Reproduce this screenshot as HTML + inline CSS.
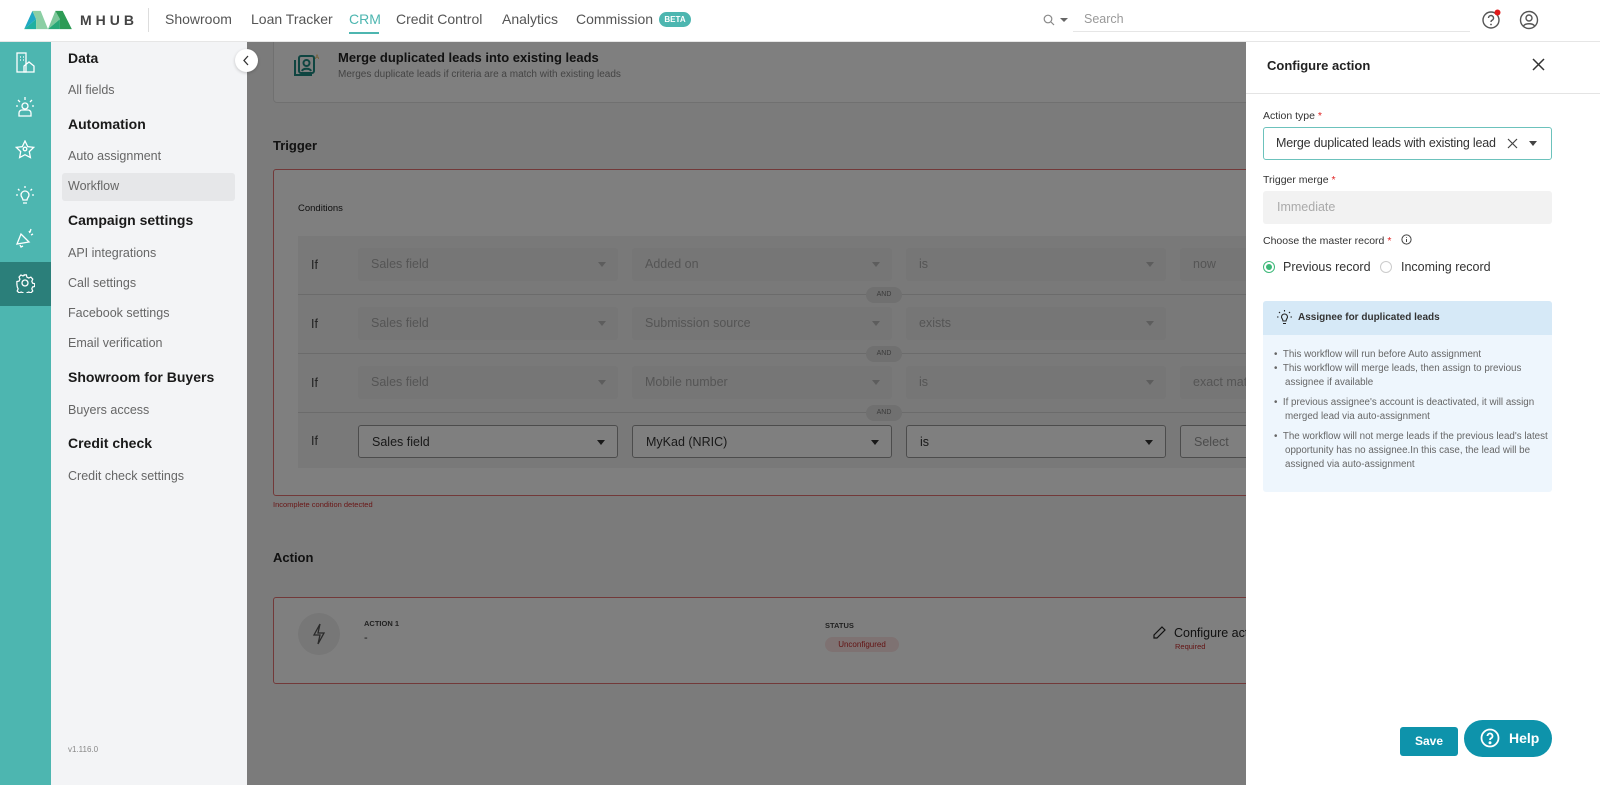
<!DOCTYPE html>
<html><head><meta charset="utf-8">
<style>
*{box-sizing:border-box;margin:0;padding:0}
body{width:1600px;height:785px;overflow:hidden;font-family:"Liberation Sans",sans-serif;background:#fff;position:relative;color:#222}
.abs{position:absolute}
#hdr{left:0;top:0;width:1600px;height:42px;background:#fff;border-bottom:1px solid #e6e6e6}
.nav{top:11px;font-size:14px;color:#555}
#rail{left:0;top:42px;width:51px;height:743px;background:#4db6b0}
#side{left:51px;top:42px;width:196px;height:743px;background:#f3f4f6}
.sh{left:17px;font-size:14px;font-weight:bold;color:#1a1a1a}
.si{left:17px;font-size:12.5px;color:#666}
#content{left:247px;top:42px;width:999px;height:743px;background:#f7f7f7;overflow:hidden}
.box{background:#fff;border:1px solid #e0e0e0;border-radius:4px}
.sel{height:33px;background:#ececec;border-radius:3px;font-size:12.5px;color:#aaa;padding:9px 13px}
.sel:after{content:"";position:absolute;right:12px;top:14px;border:4px solid transparent;border-top:5px solid #bbb}
.sel.on{background:#fff;border:1px solid #999;color:#333}
.sel.on:after{border-top-color:#333}
.and{left:619px;width:36px;height:16px;border-radius:8px;background:#e0e0e0;font-size:7px;color:#777;text-align:center;line-height:16px}
#ov{left:247px;top:42px;width:999px;height:743px;background:rgba(0,0,0,0.5)}
#panel{left:1246px;top:42px;width:354px;height:743px;background:#fff}
.lbl{font-size:10.5px;color:#333}
.req{color:#e02020}
</style></head><body>
<div id="hdr" class="abs">
 <svg class="abs" style="left:22px;top:9px" width="52" height="22" viewBox="0 0 52 24">
  <polygon points="0,22 9,2 13,11" fill="#1fa8c4"/><polygon points="0,22 13,11 13,22" fill="#1fb0a0"/>
  <polygon points="13,11 9,2 18,2 26,22 13,22" fill="#8ccfa4"/>
  <polygon points="26,22 34,2 39,11" fill="#7cc79a"/><polygon points="26,22 39,11 39,22" fill="#27a877"/>
  <polygon points="39,11 34,2 42,2 52,22 39,22" fill="#2d9b55"/>
 </svg>
 <div class="abs" style="left:80px;top:12px;font-size:14px;font-weight:bold;letter-spacing:4px;color:#444">MHUB</div>
 <div class="abs" style="left:148px;top:8px;width:1px;height:24px;background:#ddd"></div>
 <div class="abs nav" style="left:165px">Showroom</div>
 <div class="abs nav" style="left:251px">Loan Tracker</div>
 <div class="abs nav" style="left:349px;color:#4db6b0">CRM</div>
 <div class="abs" style="left:349px;top:32px;width:30px;height:2px;background:#4db6b0"></div>
 <div class="abs nav" style="left:396px">Credit Control</div>
 <div class="abs nav" style="left:502px">Analytics</div>
 <div class="abs nav" style="left:576px">Commission</div>
 <div class="abs" style="left:659px;top:12px;width:32px;height:15px;border-radius:8px;background:#4db6b0;color:#fff;font-size:8px;font-weight:bold;text-align:center;line-height:15px">BETA</div>
 <svg class="abs" style="left:1043px;top:14px" width="12" height="12" viewBox="0 0 12 12"><circle cx="5" cy="5" r="3.8" stroke="#888" fill="none" stroke-width="1.2"/><line x1="8" y1="8" x2="11" y2="11" stroke="#888" stroke-width="1.2"/></svg>
 <div class="abs" style="left:1060px;top:18px;border:4px solid transparent;border-top:4px solid #666"></div>
 <div class="abs" style="left:1084px;top:12px;font-size:12.5px;color:#999">Search</div>
 <div class="abs" style="left:1073px;top:31px;width:397px;height:1px;background:#e6e6e6"></div>
 <svg class="abs" style="left:1481px;top:9px" width="22" height="22" viewBox="0 0 22 22"><circle cx="10" cy="11" r="8" stroke="#555" fill="none" stroke-width="1.4"/><path d="M7.5 9a2.5 2.5 0 1 1 3.5 2.3c-.8.4-1 .9-1 1.7" stroke="#555" fill="none" stroke-width="1.4"/><circle cx="10" cy="15.5" r=".9" fill="#555"/><circle cx="16.5" cy="3.5" r="3" fill="#e21b1b"/></svg>
 <svg class="abs" style="left:1519px;top:10px" width="20" height="20" viewBox="0 0 20 20"><circle cx="10" cy="10" r="8.5" stroke="#555" fill="none" stroke-width="1.4"/><circle cx="10" cy="8" r="3" stroke="#555" fill="none" stroke-width="1.4"/><path d="M4.5 16c1.5-3 9.5-3 11 0" stroke="#555" fill="none" stroke-width="1.4"/></svg>
</div>

<div id="rail" class="abs">
 <div class="abs" style="left:0;top:220px;width:51px;height:44px;background:#2b7f7a"></div>
 <svg class="abs" style="left:15px;top:10px" width="20" height="22" viewBox="0 0 20 22" fill="none" stroke="#fff" stroke-width="1.3"><rect x="2" y="1" width="9" height="19"/><path d="M9 20v-6l5-4 5 4v6z"/><path d="M5 5h1M8 5h1M5 8h1M8 8h1"/></svg>
 <svg class="abs" style="left:15px;top:54px" width="20" height="22" viewBox="0 0 20 22" fill="none" stroke="#fff" stroke-width="1.3"><circle cx="10" cy="10" r="3"/><path d="M4 20v-3a3 3 0 0 1 3-3h6a3 3 0 0 1 3 3v3zM10 1v3M3 4l2 2M17 4l-2 2M1 10h2M17 10h2"/></svg>
 <svg class="abs" style="left:15px;top:98px" width="20" height="20" viewBox="0 0 20 20" fill="none" stroke="#fff" stroke-width="1.3"><path d="M10 1l2.7 5.6 6 .8-4.4 4.2 1.1 6L10 14.7 4.6 17.6l1.1-6L1.3 7.4l6-.8z"/><circle cx="10" cy="9" r="1.8"/></svg>
 <svg class="abs" style="left:15px;top:142px" width="20" height="22" viewBox="0 0 20 22" fill="none" stroke="#fff" stroke-width="1.3"><path d="M6 11a4 4 0 1 1 8 0c0 2-2 3-2 5H8c0-2-2-3-2-5zM8 19h4M10 2v2M3 5l1.5 1.5M17 5l-1.5 1.5M1 11h2M17 11h2"/></svg>
 <svg class="abs" style="left:15px;top:186px" width="20" height="20" viewBox="0 0 20 20" fill="none" stroke="#fff" stroke-width="1.3"><path d="M2 16l4-10 8 8zM5 17l1 2 2-1M14 3l1 2M18 6l-2 1M16 1l-1 3"/></svg>
 <svg class="abs" style="left:15px;top:231px" width="20" height="20" viewBox="0 0 20 20" fill="none" stroke="#fff" stroke-width="1.3"><circle cx="10" cy="10" r="3"/><path d="M8.5 1.5h3l.5 2.3 2 1 2.2-1 2 2.2-1 2.2.8 2 2.2.5v3l-2.2.5-.8 2 1 2.2-2 2.1-2.2-1-2 .9-.5 2.3h-3l-.5-2.3-2-.9-2.2 1-2-2.1 1-2.2-.9-2L1.5 11.5v-3l2.3-.5.9-2-1-2.2 2-2.2 2.2 1 2-1z" transform="scale(.95) translate(.5 .5)"/></svg>
</div>

<div id="side" class="abs">
 <div class="abs sh" style="top:8px">Data</div>
 <div class="abs si" style="top:41px">All fields</div>
 <div class="abs sh" style="top:74px">Automation</div>
 <div class="abs si" style="top:107px">Auto assignment</div>
 <div class="abs" style="left:11px;top:131px;width:173px;height:28px;background:#e6e7e9;border-radius:3px"></div>
 <div class="abs si" style="top:137px">Workflow</div>
 <div class="abs sh" style="top:170px">Campaign settings</div>
 <div class="abs si" style="top:204px">API integrations</div>
 <div class="abs si" style="top:234px">Call settings</div>
 <div class="abs si" style="top:264px">Facebook settings</div>
 <div class="abs si" style="top:294px">Email verification</div>
 <div class="abs sh" style="top:327px">Showroom for Buyers</div>
 <div class="abs si" style="top:361px">Buyers access</div>
 <div class="abs sh" style="top:393px">Credit check</div>
 <div class="abs si" style="top:427px">Credit check settings</div>
 <div class="abs" style="left:17px;top:703px;font-size:8px;color:#888">v1.116.0</div>
</div>

<div id="content" class="abs">
 <div class="abs box" style="left:26px;top:-10px;width:1000px;height:71px"></div>
 <svg class="abs" style="left:45px;top:10px" width="28" height="28" viewBox="0 0 28 28" fill="none" stroke="#1f8a82" stroke-width="2"><rect x="7" y="4" width="15" height="17" rx="2"/><circle cx="14.5" cy="11" r="3"/><path d="M10 19c1-3 8-3 9 0M3 8v15h17"/><text x="23" y="7" font-size="6" fill="#e0a020" stroke="none" font-family="Liberation Sans">A</text></svg>
 <div class="abs" style="left:91px;top:8px;font-size:13px;font-weight:bold;color:#222">Merge duplicated leads into existing leads</div>
 <div class="abs" style="left:91px;top:27px;font-size:10px;color:#888">Merges duplicate leads if criteria are a match with existing leads</div>
 <div class="abs" style="left:26px;top:96px;font-size:13px;font-weight:bold;color:#222">Trigger</div>
 <div class="abs" style="left:26px;top:127px;width:1000px;height:327px;background:#fff;border:1px solid #e57373;border-radius:3px"></div>
 <div class="abs" style="left:51px;top:161px;font-size:9.5px;color:#222">Conditions</div>
 <div class="abs" style="left:51px;top:194px;width:960px;height:232px;background:#f3f3f3"></div>
 <div class="abs" style="left:51px;top:252px;width:960px;height:1px;background:#d6d6d6"></div>
 <div class="abs" style="left:51px;top:311px;width:960px;height:1px;background:#d6d6d6"></div>
 <div class="abs" style="left:51px;top:370px;width:960px;height:1px;background:#d6d6d6"></div>
 <div class="abs and" style="top:245px">AND</div>
 <div class="abs and" style="top:304px">AND</div>
 <div class="abs and" style="top:363px">AND</div>
 <div class="abs" style="left:64px;top:216px;font-size:12.5px;color:#444">If</div>
 <div class="abs sel" style="left:111px;top:206px;width:260px">Sales field</div>
 <div class="abs sel" style="left:385px;top:206px;width:260px">Added on</div>
 <div class="abs sel" style="left:659px;top:206px;width:260px">is</div>
 <div class="abs sel" style="left:933px;top:206px;width:100px">now</div>
 <div class="abs" style="left:64px;top:275px;font-size:12.5px;color:#444">If</div>
 <div class="abs sel" style="left:111px;top:265px;width:260px">Sales field</div>
 <div class="abs sel" style="left:385px;top:265px;width:260px">Submission source</div>
 <div class="abs sel" style="left:659px;top:265px;width:260px">exists</div>
 <div class="abs" style="left:64px;top:334px;font-size:12.5px;color:#444">If</div>
 <div class="abs sel" style="left:111px;top:324px;width:260px">Sales field</div>
 <div class="abs sel" style="left:385px;top:324px;width:260px">Mobile number</div>
 <div class="abs sel" style="left:659px;top:324px;width:260px">is</div>
 <div class="abs sel" style="left:933px;top:324px;width:100px">exact match</div>
 <div class="abs" style="left:64px;top:392px;font-size:12.5px;color:#444">If</div>
 <div class="abs sel on" style="left:111px;top:383px;width:260px">Sales field</div>
 <div class="abs sel on" style="left:385px;top:383px;width:260px">MyKad (NRIC)</div>
 <div class="abs sel on" style="left:659px;top:383px;width:260px">is</div>
 <div class="abs sel on" style="left:933px;top:383px;width:100px;color:#999">Select</div>
 <div class="abs" style="left:26px;top:458px;font-size:7.5px;color:#d32f2f">Incomplete condition detected</div>
 <div class="abs" style="left:26px;top:508px;font-size:13px;font-weight:bold;color:#222">Action</div>
 <div class="abs" style="left:26px;top:555px;width:1000px;height:87px;background:#fff;border:1px solid #e57373;border-radius:3px"></div>
 <div class="abs" style="left:51px;top:571px;width:42px;height:42px;border-radius:50%;background:#eee"></div>
 <svg class="abs" style="left:64px;top:581px" width="16" height="22" viewBox="0 0 16 22" fill="none" stroke="#555" stroke-width="1.3"><path d="M9 1L3 12h6l-2 9 6-11H7z"/></svg>
 <div class="abs" style="left:117px;top:577px;font-size:7.5px;font-weight:bold;color:#444">ACTION 1</div>
 <div class="abs" style="left:117px;top:590px;font-size:11px;color:#333">-</div>
 <div class="abs" style="left:578px;top:579px;font-size:7.5px;font-weight:bold;color:#444">STATUS</div>
 <div class="abs" style="left:578px;top:595px;width:74px;height:15px;border-radius:8px;background:#fde4e4;font-size:8px;color:#c62828;text-align:center;line-height:15px">Unconfigured</div>
 <svg class="abs" style="left:905px;top:584px" width="14" height="14" viewBox="0 0 14 14" fill="none" stroke="#222" stroke-width="1.2"><path d="M10 1l3 3-8 8H2v-3z"/></svg>
 <div class="abs" style="left:927px;top:584px;font-size:12.5px;color:#222;white-space:nowrap">Configure action</div>
 <div class="abs" style="left:928px;top:600px;font-size:7.5px;color:#c62828">Required</div>
</div>
<div id="ov" class="abs"></div>
<div class="abs" style="left:235px;top:49px;width:23px;height:23px;border-radius:50%;background:#fff;box-shadow:0 1px 3px rgba(0,0,0,.2)"></div>
<svg class="abs" style="left:242px;top:55px" width="8" height="11" viewBox="0 0 8 11"><path d="M6 1L2 5.5 6 10" stroke="#333" fill="none" stroke-width="1.3"/></svg>

<div id="panel" class="abs">
 <div class="abs" style="left:21px;top:16px;font-size:13px;font-weight:bold;color:#222">Configure action</div>
 <svg class="abs" style="left:286px;top:16px" width="13" height="13" viewBox="0 0 13 13"><path d="M1 1l11 11M12 1L1 12" stroke="#333" stroke-width="1.5"/></svg>
 <div class="abs" style="left:0;top:51px;width:354px;height:1px;background:#e4e4e4"></div>
 <div class="abs lbl" style="left:17px;top:68px">Action type <span class="req">*</span></div>
 <div class="abs" style="left:17px;top:85px;width:289px;height:33px;border:1px solid #6cc2bc;border-radius:3px"></div>
 <div class="abs" style="left:30px;top:94px;font-size:12.5px;color:#333;white-space:nowrap;width:221px;overflow:hidden;letter-spacing:-0.2px">Merge duplicated leads with existing lead</div>
 <svg class="abs" style="left:261px;top:96px" width="11" height="11" viewBox="0 0 11 11"><path d="M1 1l9 9M10 1L1 10" stroke="#444" stroke-width="1.2"/></svg>
 <div class="abs" style="left:283px;top:99px;border:4px solid transparent;border-top:5px solid #444"></div>
 <div class="abs lbl" style="left:17px;top:132px">Trigger merge <span class="req">*</span></div>
 <div class="abs" style="left:17px;top:149px;width:289px;height:33px;background:#f2f2f2;border-radius:3px;font-size:12.5px;color:#aaa;padding:9px 14px">Immediate</div>
 <div class="abs lbl" style="left:17px;top:193px">Choose the master record <span class="req">*</span></div>
 <svg class="abs" style="left:155px;top:192px" width="11" height="11" viewBox="0 0 11 11"><circle cx="5.5" cy="5.5" r="4.6" stroke="#444" fill="none"/><path d="M5.5 5v3M5.5 3v.8" stroke="#444"/></svg>
 <div class="abs" style="left:17px;top:219px;width:12px;height:12px;border-radius:50%;border:1px solid #3cb878"></div>
 <div class="abs" style="left:20px;top:222px;width:6px;height:6px;border-radius:50%;background:#3cb878"></div>
 <div class="abs" style="left:37px;top:218px;font-size:12.5px;color:#333">Previous record</div>
 <div class="abs" style="left:134px;top:219px;width:12px;height:12px;border-radius:50%;border:1px solid #ccc"></div>
 <div class="abs" style="left:155px;top:218px;font-size:12.5px;color:#333">Incoming record</div>
 <div class="abs" style="left:17px;top:259px;width:289px;height:191px;background:#eef6fd;border-radius:3px;overflow:hidden">
  <div style="height:34px;background:#d6e9f7"></div>
 </div>
 <svg class="abs" style="left:30px;top:267px" width="17" height="17" viewBox="0 0 17 17" fill="none" stroke="#222" stroke-width="1.1"><path d="M5.5 8a3 3 0 1 1 6 0c0 1.5-1.5 2-1.5 4h-3c0-2-1.5-2.5-1.5-4zM7 14.5h3M8.5 1v1.5M3 3l1 1M14 3l-1 1M1 8h1.5M14.5 8H16"/></svg>
 <div class="abs" style="left:52px;top:270px;font-size:10px;font-weight:bold;color:#333">Assignee for duplicated leads</div>
 <div class="abs" style="left:28px;top:306px;font-size:9.8px;line-height:14px;color:#666;width:280px">
  <div style="padding-left:11px;text-indent:-11px">•&nbsp;&nbsp;This workflow will run before Auto assignment</div>
  <div style="padding-left:11px;text-indent:-11px">•&nbsp;&nbsp;This workflow will merge leads, then assign to previous assignee if available</div>
  <div style="padding-left:11px;text-indent:-11px;margin-top:6px">•&nbsp;&nbsp;If previous assignee's account is deactivated, it will assign merged lead via auto-assignment</div>
  <div style="padding-left:11px;text-indent:-11px;margin-top:6px">•&nbsp;&nbsp;The workflow will not merge leads if the previous lead's latest opportunity has no assignee.In this case, the lead will be assigned via auto-assignment</div>
 </div>
 <div class="abs" style="left:154px;top:685px;width:58px;height:29px;background:#0e93ab;border-radius:3px;color:#fff;font-size:12px;font-weight:bold;text-align:center;line-height:29px">Save</div>
 <div class="abs" style="left:218px;top:678px;width:88px;height:37px;background:#0e93ab;border-radius:19px;color:#fff;font-size:14px;font-weight:bold;line-height:37px;padding-left:45px">Help</div>
 <svg class="abs" style="left:234px;top:686px" width="20" height="20" viewBox="0 0 20 20" fill="none" stroke="#fff" stroke-width="1.8"><circle cx="10" cy="10" r="8.5"/><path d="M7.5 8a2.5 2.5 0 1 1 3.5 2.3c-.8.4-1 .9-1 1.7"/><circle cx="10" cy="14.8" r=".6" fill="#fff"/></svg>
</div>
</body></html>
